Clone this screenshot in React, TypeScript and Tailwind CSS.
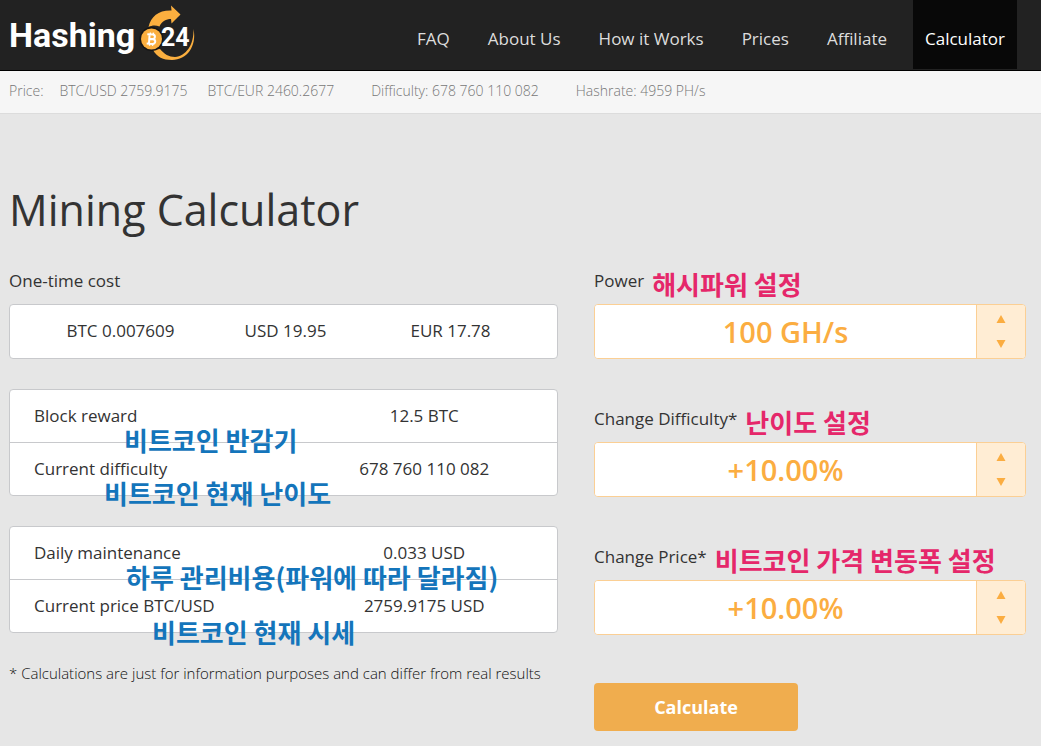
import React, { useState } from "react";

const navItems = ["FAQ", "About Us", "How it Works", "Prices", "Affiliate", "Calculator"];

function Logo() {
  return (
    <a href="#" aria-label="Hashing24" className="block shrink-0">
      <svg width="190" height="64" viewBox="8 0 190 64" className="block">
        <text
          x="9"
          y="47"
          fill="#fff"
          fontSize="34"
          fontWeight="700"
          fontFamily="Roboto, 'Open Sans', sans-serif"
        >
          Hashing
        </text>
        {/* Arrow over the coin */}
        <path
          d="M148.500 27 C151 16 159 10 171.500 10.500 L171 5.500 L180.500 14.500 L171.500 23.500 L171 19 C166 19 162 21 159.500 26.500 C156 25 152 25 148.500 27 Z"
          fill="#fbaf3f"
        />
        {/* Tapered tail under the number */}
        <path
          d="M193.500 29 C197 46 187 60 172 60 C163 60 157 57 153 50 L160 49 C164 54 169 57 175 57 C186 56 194 45 193.500 29 Z"
          fill="#fbaf3f"
        />
        <circle cx="151.500" cy="39" r="12" fill="#151515" />
        <circle cx="151.500" cy="39" r="10.500" fill="#fbaf3f" />
        <g fill="none" stroke="#fff" strokeWidth="2" transform="rotate(4 151 39)">
          <path d="M147 34.500h5.500a2.200 2.200 0 0 1 0 4.500h-3h3.500a2.300 2.300 0 0 1 0 4.800h-6M149.300 34.500v9.300" />
          <path d="M150 32.500v2M153 32.500v2M150 43.500v2.300M153 43.500v2.300" strokeWidth="1.400" />
        </g>
        <text
          x="161"
          y="46"
          fill="#fff"
          fontSize="25"
          fontWeight="700"
          fontFamily="Roboto, 'Open Sans', sans-serif"
        >
          24
        </text>
      </svg>
    </a>
  );
}

type Row = { label: string; value: string; note: string; place: string };

function InfoTable({ rows }: { rows: Row[] }) {
  return (
    <div className="rounded border border-[#c8c9cc] bg-white pb-px">
      <table className="w-full table-fixed border-collapse">
        <tbody>
          {rows.map((row) => (
            <tr key={row.label} className="border-t border-[#c8c9cc] first:border-t-0">
              <th scope="row" className="relative h-[52px] pl-6 text-left font-normal">
                {row.label}
                <span
                  className={`absolute z-10 whitespace-nowrap font-['Noto_Sans_CJK_KR',sans-serif] text-[26px] font-bold leading-7 text-[#1475bb] ${row.place}`}
                >
                  {row.note}
                </span>
              </th>
              <td className="pl-2 text-center">{row.value}</td>
            </tr>
          ))}
        </tbody>
      </table>
    </div>
  );
}

type FieldProps = {
  id: string;
  label: string;
  note: string;
  start: number;
  step: number;
  format: (n: number) => string;
};

function Stepper({ id, label, note, start, step, format }: FieldProps) {
  const [value, setValue] = useState(start);

  return (
    <div>
      <div className="flex h-[35px] items-start gap-2">
        <label htmlFor={id} className="leading-6">
          {label}
        </label>
        <span className="whitespace-nowrap font-['Noto_Sans_CJK_KR',sans-serif] text-[26px] font-bold leading-[30px] text-[#e5276a]">
          {note}
        </span>
      </div>
      <div className="flex h-[55px] overflow-hidden rounded border border-[#fbcf94] bg-white">
        <input
          id={id}
          readOnly
          value={format(value)}
          className="min-w-0 flex-1 bg-white text-center text-[29px] font-semibold text-[#fbad41] outline-none"
        />
        <div className="flex w-[49px] flex-col border-l border-[#fbcf94] bg-[#ffedd4]">
          <button
            type="button"
            aria-label={`Increase ${label}`}
            onClick={() => setValue(value + step)}
            className="flex flex-1 items-center justify-center pt-0.5"
          >
            <svg width="10" height="8" viewBox="0 0 10 8">
              <path d="M5 0l4.500 8h-9z" fill="#fbad41" />
            </svg>
          </button>
          <button
            type="button"
            aria-label={`Decrease ${label}`}
            onClick={() => setValue(value - step)}
            className="flex flex-1 items-center justify-center pb-0.5"
          >
            <svg width="10" height="8" viewBox="0 0 10 8">
              <path d="M5 8L.5 0h9z" fill="#fbad41" />
            </svg>
          </button>
        </div>
      </div>
    </div>
  );
}

const percent = (n: number) => `${n >= 0 ? "+" : ""}${n.toFixed(2)}%`;

export default function App() {
  return (
    <div className="min-h-screen bg-[#e6e6e6] font-['Open_Sans',sans-serif] text-[17px] text-[#333]">
      {/* Header */}
      <header className="flex h-[71px] items-start justify-between border-b border-black bg-[#222] pl-2 pr-6">
        <Logo />
        <nav className="flex gap-3.5">
          {navItems.map((item) => (
            <a
              key={item}
              href="#"
              className={
                item === "Calculator"
                  ? "flex h-[69px] items-center bg-[#080808] px-3 pt-2 whitespace-nowrap text-white"
                  : "flex h-[69px] items-center px-3 pt-2 whitespace-nowrap text-[#ddd]"
              }
            >
              {item}
            </a>
          ))}
        </nav>
      </header>

      {/* Ticker */}
      <div className="flex h-[43px] items-center border-b border-[#dcdcdc] bg-[#f6f6f6] pb-0.5 pl-[9px] text-sm font-light whitespace-nowrap text-[#777]">
        <span className="mr-4">Price:</span>
        <span className="mr-5">BTC/USD 2759.9175</span>
        <span className="mr-[37px]">BTC/EUR 2460.2677</span>
        <span className="mr-[37px]">Difficulty: 678 760 110 082</span>
        <span>Hashrate: 4959 PH/s</span>
      </div>

      <main className="pb-4 pl-[9px] pr-[15px] pt-16">
        <h1 className="text-[43px] leading-[64px]">Mining Calculator</h1>

        <div className="mt-[27px] grid grid-cols-[549fr_432fr] items-start gap-9">
          {/* Results */}
          <section>
            <h2 className="h-[35px] leading-6">One-time cost</h2>
            <ul className="grid h-[55px] grid-cols-3 items-center rounded border border-[#c8c9cc] bg-white pb-0.5 pl-7 pr-6 text-center">
              <li>BTC 0.007609</li>
              <li>USD 19.95</li>
              <li>EUR 17.78</li>
            </ul>

            <div className="mt-[30px] flex flex-col gap-[30px]">
              <InfoTable
                rows={[
                  {
                    label: "Block reward",
                    value: "12.5 BTC",
                    note: "비트코인 반감기",
                    place: "left-[114px] top-9",
                  },
                  {
                    label: "Current difficulty",
                    value: "678 760 110 082",
                    note: "비트코인 현재 난이도",
                    place: "left-[94px] top-9",
                  },
                ]}
              />
              <InfoTable
                rows={[
                  {
                    label: "Daily maintenance",
                    value: "0.033 USD",
                    note: "하루 관리비용(파워에 따라 달라짐)",
                    place: "left-[116px] top-9",
                  },
                  {
                    label: "Current price BTC/USD",
                    value: "2759.9175 USD",
                    note: "비트코인 현재 시세",
                    place: "left-[142px] top-[38px]",
                  },
                ]}
              />
            </div>

            <p className="mt-[30px] text-[15px] font-light leading-5 text-[#111]">
              * Calculations are just for information purposes and can differ from real results
            </p>
          </section>

          {/* Settings */}
          <form className="flex flex-col gap-12" onSubmit={(e) => e.preventDefault()}>
            <Stepper
              id="power"
              label="Power"
              note="해시파워 설정"
              start={100}
              step={100}
              format={(n) => `${n} GH/s`}
            />
            <Stepper
              id="difficulty"
              label="Change Difficulty*"
              note="난이도 설정"
              start={10}
              step={1}
              format={percent}
            />
            <Stepper
              id="price"
              label="Change Price*"
              note="비트코인 가격 변동폭 설정"
              start={10}
              step={1}
              format={percent}
            />
            <button
              type="submit"
              className="h-12 w-[204px] rounded bg-[#f0ad4e] text-lg font-bold text-white"
            >
              Calculate
            </button>
          </form>
        </div>
      </main>
    </div>
  );
}
